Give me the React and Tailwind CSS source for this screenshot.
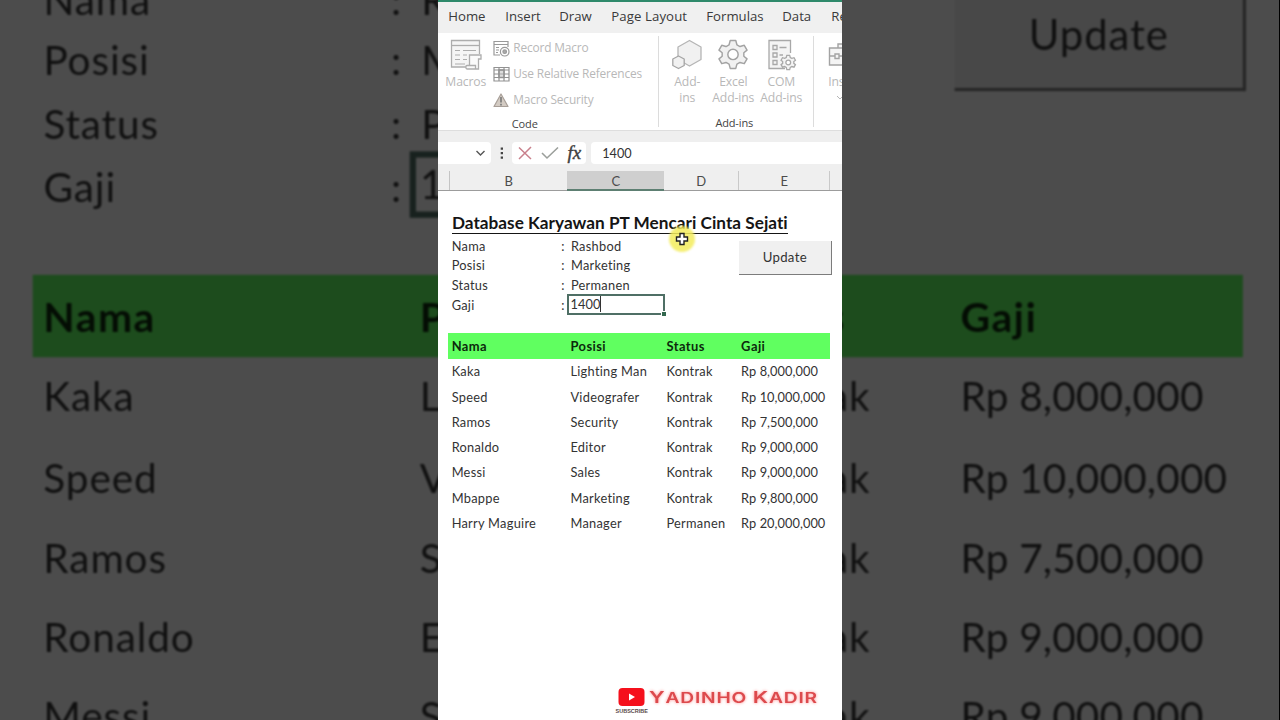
import React from "react";

const EMPLOYEES = [
  ["Kaka", "Lighting Man", "Kontrak", "Rp 8,000,000"],
  ["Speed", "Videografer", "Kontrak", "Rp 10,000,000"],
  ["Ramos", "Security", "Kontrak", "Rp 7,500,000"],
  ["Ronaldo", "Editor", "Kontrak", "Rp 9,000,000"],
  ["Messi", "Sales", "Kontrak", "Rp 9,000,000"],
  ["Mbappe", "Marketing", "Kontrak", "Rp 9,800,000"],
  ["Harry Maguire", "Manager", "Permanen", "Rp 20,000,000"],
];

const FORM = [
  ["Nama", "Rashbod"],
  ["Posisi", "Marketing"],
  ["Status", "Permanen"],
  ["Gaji", "1400"],
];

const COLS = "grid grid-cols-[118.8px_96px_74.7px_1fr]";

function Form() {
  return (
    <div className="flex h-[78.4px] flex-col">
      {FORM.map(([label, value]) => (
        <div key={label} className="flex h-[19.6px] items-center pl-[13.4px]">
          <span className="w-[109.7px]">{label}</span>
          <span className="w-[5.6px]">:</span>
          {label === "Gaji" ? (
            <span className="relative -mt-[1.4px] flex h-[21.6px] w-[98.5px] shrink-0 items-center border-2 border-[#4f6f65] pl-[1.6px] tracking-[0.05px]">
              {value}
              <span className="h-[16px] w-px bg-[#333]" />
              <span className="absolute -right-[3px] -bottom-[3px] size-[5px] border-t border-l border-white bg-[#33684f]" />
            </span>
          ) : (
            <span className="pl-[4px]">{value}</span>
          )}
        </div>
      ))}
    </div>
  );
}

function UpdateButton() {
  return (
    <button className="absolute top-[50px] left-[300.8px] h-[33.5px] w-[92.5px] border-r-[1.6px] border-b-[1.6px] border-[#7c7c7c] bg-[#f0f0f0] pt-[1px] text-center text-[13.2px] tracking-[0.3px]">
      Update
    </button>
  );
}

function Table() {
  return (
    <div className="ml-[10.2px] w-[381.7px]">
      <div className={`${COLS} h-[26.5px] items-center bg-[#60ff60] pt-[0.6px] pl-[3.2px] text-[12.9px] font-bold tracking-[0.45px] text-[#0c2a0c]`}>
        <span>Nama</span>
        <span>Posisi</span>
        <span>Status</span>
        <span>Gaji</span>
      </div>
      {EMPLOYEES.map((row) => (
        <div key={row[0]} className={`${COLS} h-[25.3px] items-center pb-[0.8px] pl-[3.2px] whitespace-nowrap`}>
          <span>{row[0]}</span>
          <span>{row[1]}</span>
          <span>{row[2]}</span>
          <span className="tracking-[0.05px]">{row[3]}</span>
        </div>
      ))}
    </div>
  );
}

function Sheet({ title }) {
  return (
    <div className="relative w-[403.5px] bg-white pt-[22px] font-['Lato',sans-serif] text-[12.8px] leading-none tracking-[0.28px] text-[#333] [font-variant-ligatures:none]">
      <div className="h-[23.5px] pl-[13.7px]">
        {title && (
          <h1 className="inline-block border-b-[1.6px] border-[#151515] pb-[0.5px] text-[17.2px] leading-[19px] font-bold tracking-[0.02px] whitespace-nowrap text-[#151515]">
            {title}
          </h1>
        )}
      </div>
      <Form />
      <div className="h-[18px]" />
      <Table />
      <UpdateButton />
    </div>
  );
}

function Backdrop() {
  return (
    <div className="absolute inset-0 overflow-hidden bg-white brightness-[0.3]">
      <div className="absolute top-[-174.8px] left-[0.8px] origin-top-left scale-[3.168] blur-[0.4px]">
        <Sheet />
      </div>
      <div className="absolute inset-y-0 left-0 w-[10px] bg-white" />
      <div className="absolute inset-y-0 right-0 w-[1.5px] bg-black" />
    </div>
  );
}

function MenuBar() {
  return (
    <nav className="flex h-[33px] shrink-0 items-center border-t-2 border-[#2f8a6b] bg-[#f0f0f0] pb-[2px] pl-[10px] font-['Open_Sans',sans-serif] text-[13.2px] whitespace-nowrap text-[#3a3a3a] *:shrink-0">
      <span className="w-[57px]">Home</span>
      <span className="w-[54px]">Insert</span>
      <span className="w-[52px]">Draw</span>
      <span className="w-[95px] tracking-[0.1px]">Page Layout</span>
      <span className="w-[76px]">Formulas</span>
      <span className="w-[49px]">Data</span>
      <span>Review</span>
    </nav>
  );
}

function MacrosIcon() {
  return (
    <svg width="32" height="32" viewBox="0 0 32 32" fill="none" stroke="#adadad" strokeWidth="1.3">
      <path d="M17 28H1.5V1.5H29.5V15" fill="#f5f5f5" />
      <path d="M1.5 6.5H29.5" />
      <path d="M5 11.5H10M13 11.5H26M5 16H10M13 16H17M5 20.500H10M13 20.500H17M5 25H15" strokeWidth="1.2" />
      <path d="M19.500 16H31V20H28.500V30H17C15.500 30 15.500 26.500 17 26.500H19.500ZM19.500 26.500H25.500V30" fill="#fafafa" />
    </svg>
  );
}

function RecordIcon() {
  return (
    <svg width="17" height="17" viewBox="0 0 17 17" fill="none" stroke="#999" strokeWidth="1.2">
      <path d="M7 15H1V1.500H15V7M1 4.500H15M3 7.500H6M3 10H6M3 12.500H5" />
      <circle cx="11.700" cy="11.700" r="4.300" fill="#fff" />
      <circle cx="11.700" cy="11.700" r="1.800" fill="#aaa" />
    </svg>
  );
}

function GridIcon() {
  return (
    <svg width="17" height="17" viewBox="0 0 17 17" fill="none" stroke="#929292" strokeWidth="1.2">
      <path d="M1 1.500H16V15H1Z" />
      <path d="M1 4H16M1 8H16M1 11.500H16M6 1.500V15M11 1.500V15" />
      <path d="M6 4H11V11.500H6Z" fill="#bbb" fillOpacity="0.5" strokeWidth="1.500" />
    </svg>
  );
}

function WarningIcon() {
  return (
    <svg width="17" height="17" viewBox="0 0 17 17">
      <path d="M8 2L15 14.500H1Z" fill="#d3cbc3" stroke="#a89f98" strokeWidth="1.2" strokeLinejoin="round" />
      <path d="M8 5V10.500M8 11.800V13.500" stroke="#777" strokeWidth="1.600" />
    </svg>
  );
}

function HexagonsIcon() {
  return (
    <svg width="32" height="32" viewBox="0 0 32 32" fill="#f1f1f1" stroke="#b5b5b5" strokeWidth="1.3" strokeLinejoin="round">
      <path d="M18.500 1.500L30 8V20.500L18.500 27L7 20.500V8Z" />
      <path d="M7.500 17L13.200 20V26.500L7.500 29.500L1.800 26.500V20Z" stroke="#a5a5a5" />
    </svg>
  );
}

const GEAR =
  "M12.300 1.500H17.700L18.800 5.600L21.800 7.300L25.900 6.100L28.600 10.800L25.500 13.300V16.700L28.600 19.200L25.900 23.900L21.800 22.700L18.800 24.400L17.700 28.500H12.300L11.200 24.400L8.200 22.700L4.100 23.900L1.400 19.200L4.500 16.700V13.300L1.400 10.800L4.100 6.100L8.200 7.300L11.200 5.600Z";

function GearIcon() {
  return (
    <svg width="32" height="32" viewBox="-0.500 0 31 31" fill="#f1f1f1" stroke="#a3a3a3" strokeWidth="1.400" strokeLinejoin="round">
      <path d={GEAR} />
      <circle cx="15" cy="15" r="5" fill="#fff" />
    </svg>
  );
}

function ComIcon() {
  return (
    <svg width="32" height="32" viewBox="0 0 32 32" fill="none" stroke="#a8a8a8" strokeWidth="1.300">
      <path d="M25.500 14V1.500H4V29.500H20" fill="#f4f4f4" />
      <path d="M8 6.500H12V10.500H8ZM8 14H12V18H8ZM8 21.500H12V25.500H8ZM14.500 8.500H21.500M14.500 16H18" />
      <g transform="translate(15.300 15.500) scale(0.530)" strokeWidth="2.400" fill="#f4f4f4">
        <path d={GEAR} />
        <circle cx="15" cy="15" r="4.500" fill="#fff" />
      </g>
    </svg>
  );
}

function BriefcaseIcon() {
  return (
    <svg width="32" height="32" viewBox="0 0 32 32" fill="#f4f4f4" stroke="#a3a3a3" strokeWidth="1.400">
      <path d="M1.500 9H30V26H1.500ZM10 9V5H22V9M1.500 17H30" />
      <path d="M7 15H11V19.500H7Z" />
    </svg>
  );
}

function BigCommand({ icon, lines, className }) {
  return (
    <div className={`flex shrink-0 flex-col items-center pt-[6px] ${className}`}>
      {icon}
      <div className="mt-[3px] text-center text-[12.2px] leading-[16px] whitespace-nowrap">
        {lines.map((line) => (
          <div key={line}>{line}</div>
        ))}
      </div>
    </div>
  );
}

function SmallCommand({ icon, label }) {
  return (
    <div className="flex h-[26px] items-center gap-[3px] text-[11.9px] whitespace-nowrap">
      {icon}
      <span>{label}</span>
    </div>
  );
}

function Ribbon() {
  return (
    <div className="flex h-[98px] shrink-0 border-b border-[#dedede] bg-white font-['Open_Sans',sans-serif] tracking-[-0.15px] text-[#b8b8b8]">
      <div className="flex w-[220px] shrink-0 flex-col">
        <div className="flex h-[83px] shrink-0">
          <BigCommand className="w-[55px]" icon={<MacrosIcon />} lines={["Macros"]} />
          <div className="pt-[2px]">
            <SmallCommand icon={<RecordIcon />} label="Record Macro" />
            <SmallCommand icon={<GridIcon />} label="Use Relative References" />
            <SmallCommand icon={<WarningIcon />} label="Macro Security" />
          </div>
        </div>
        <div className="w-[173px] text-center text-[11px] leading-[16px] text-[#444]">Code</div>
      </div>
      <div className="my-[3px] flex w-[156px] shrink-0 flex-col border-x border-[#dcdcdc]">
        <div className="-mt-[3px] flex h-[86px] shrink-0 pl-[5px]">
          <BigCommand className="w-[46px]" icon={<HexagonsIcon />} lines={["Add-", "ins"]} />
          <BigCommand className="w-[46px]" icon={<GearIcon />} lines={["Excel", "Add-ins"]} />
          <BigCommand className="w-[50px]" icon={<ComIcon />} lines={["COM", "Add-ins"]} />
        </div>
        <div className="-mt-[4px] w-[150px] text-center text-[11px] leading-[16px] text-[#444]">Add-ins</div>
      </div>
      <div className="flex flex-col pt-[6px] pl-[14px] text-[12.2px] leading-[16px]">
        <BriefcaseIcon />
        <span className="mt-[3px]">Insert</span>
        <svg className="ml-[8px]" width="8" height="16" viewBox="0 0 8 16" fill="none" stroke="#b5b5b5">
          <path d="M1 6L4 9L7 6" />
        </svg>
      </div>
    </div>
  );
}

function FormulaBar() {
  return (
    <div className="flex h-[40px] shrink-0 items-center bg-[#efefef] pt-[4px]">
      <div className="flex h-[22px] w-[53px] items-center justify-end rounded-r-[4px] bg-white pr-[5px]">
        <svg width="11" height="8" viewBox="0 0 11 8" fill="none" stroke="#555" strokeWidth="1.400">
          <path d="M1.500 2L5.500 6L9.500 2" />
        </svg>
      </div>
      <svg className="ml-[9px]" width="4" height="12" viewBox="0 0 4 12" fill="#444">
        <path d="M0.700 0.500H3V2.700H0.700ZM0.700 5H3V7.200H0.700ZM0.700 9.500H3V11.700H0.700Z" />
      </svg>
      <div className="ml-[8px] flex h-[22px] w-[74px] items-center justify-between rounded-[4px] bg-white pr-[5px] pl-[6px]">
        <svg width="14" height="14" viewBox="0 0 14 14" fill="none" stroke="#c9808c" strokeWidth="1.500">
          <path d="M1 1.500L13 13M13 1L1 13" />
        </svg>
        <svg width="18" height="14" viewBox="0 0 18 14" fill="none" stroke="#9b9f9b" strokeWidth="1.600">
          <path d="M1 7L6 12L17 1.500" />
        </svg>
        <span className="font-['Liberation_Serif',serif] text-[19px] leading-[20px] text-[#404040] italic [-webkit-text-stroke:0.4px_#404040]">fx</span>
      </div>
      <div className="ml-[5px] flex h-[22px] flex-1 items-center rounded-l-[4px] bg-white pt-px pl-[11px] font-['Lato',sans-serif] text-[12.7px] text-[#333]">
        1400
      </div>
    </div>
  );
}

function ColumnHeaders() {
  return (
    <div className="flex h-[20px] shrink-0 border-b border-[#9c9c9c] bg-[#efefef] text-center font-['Lato',sans-serif] text-[13px] leading-[20px] text-[#4c4c4c]">
      <div className="w-[12px] shrink-0 border-r border-[#c4c4c4]" />
      <div className="w-[117px] shrink-0">B</div>
      <div className="-mb-px w-[97px] shrink-0 border-b-2 border-[#5d7f72] bg-[#cfcfcf]">C</div>
      <div className="w-[75px] shrink-0 border-r border-[#c9c9c9]">D</div>
      <div className="w-[91px] shrink-0 border-r border-[#c9c9c9]">E</div>
    </div>
  );
}

function CellCursor() {
  return (
    <div className="absolute top-[226px] left-[231px] flex size-[26px] items-center justify-center">
      <div className="absolute inset-0 rounded-full bg-[#f3ec5c]/85 blur-[1px]" />
      <svg className="relative" width="14" height="14" viewBox="0 0 14 14">
        <path d="M5 1.500H9V5H12.500V9H9V12.500H5V9H1.500V5H5Z" fill="#fff" stroke="#222" strokeWidth="1.400" />
      </svg>
    </div>
  );
}

function ChannelBadge() {
  return (
    <div className="absolute top-[687px] left-[176px] flex">
      <div className="flex w-[35px] flex-col items-center">
        <svg width="27" height="20" viewBox="0 0 27 20">
          <rect x="0.500" y="1" width="26" height="18" rx="4" fill="#f5101c" />
          <path d="M11 6.500L17 10L11 13.500Z" fill="#fff" />
        </svg>
        <span className="mt-[1px] font-['Liberation_Sans',sans-serif] text-[5.5px] leading-[6px] font-bold text-[#5a4a4a]">SUBSCRIBE</span>
      </div>
      <div className="origin-left scale-x-[1.37] font-['Inter',sans-serif] text-[14px] leading-[21px] font-semibold tracking-[0.6px] whitespace-nowrap text-[#dc4a4d] [text-shadow:0_0_2px_#ffb3b3,0_0_3px_#ffb3b3]">
        <span className="text-[16px]">Y</span>ADINHO <span className="text-[16px]">K</span>ADIR
      </div>
    </div>
  );
}

export default function App() {
  return (
    <div className="relative flex h-[720px] w-[1280px] justify-center overflow-hidden bg-black">
      <Backdrop />
      <main className="relative flex h-full w-[403.5px] flex-col overflow-hidden bg-white">
        <MenuBar />
        <Ribbon />
        <FormulaBar />
        <ColumnHeaders />
        <Sheet title="Database Karyawan PT Mencari Cinta Sejati" />
        <CellCursor />
        <ChannelBadge />
      </main>
    </div>
  );
}
